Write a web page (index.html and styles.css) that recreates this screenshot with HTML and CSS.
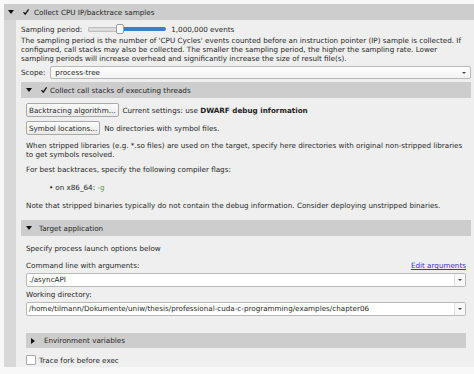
FILE: index.html
```html
<!DOCTYPE html>
<html lang="en">
<head>
    <meta charset="UTF-8">
    <title>Record settings</title>
    <link rel="stylesheet" href="styles.css">
</head>
<body>
    <div class="panel">
        <div class="head head-top">
            <span class="arrow-down"></span>
            <span class="check on"><svg viewBox="0 0 8 8"><path d="M1.5 4.2 L3.2 6.2 L6.6 1.4" fill="none" stroke="#111" stroke-width="1.3"/></svg></span>
            <span>Collect CPU IP/backtrace samples</span>
        </div>
        <div class="body body-top">
            <div class="row sampling">
                <span>Sampling period:</span>
                <div class="slider">
                    <span class="track-left"></span>
                    <span class="handle"></span>
                    <span class="track-right"></span>
                </div>
                <span>1,000,000 events</span>
            </div>
            <p class="desc">The sampling period is the number of 'CPU Cycles' events counted before an instruction pointer (IP) sample is collected. If configured, call stacks may also be collected. The smaller the sampling period, the higher the sampling rate. Lower sampling periods will increase overhead and significantly increase the size of result file(s).</p>
            <div class="row scope">
                <span>Scope:</span>
                <div class="select">
                    <span>process-tree</span>
                    <span class="drop"></span>
                </div>
            </div>

            <div class="head head-sub">
                <span class="arrow-down"></span>
                <span class="check on"><svg viewBox="0 0 8 8"><path d="M1.5 4.2 L3.2 6.2 L6.6 1.4" fill="none" stroke="#111" stroke-width="1.3"/></svg></span>
                <span>Collect call stacks of executing threads</span>
            </div>
            <div class="body body-sub">
                <div class="row btn-row first">
                    <button class="btn">Backtracing algorithm...</button>
                    <span>Current settings: use <b>DWARF debug information</b></span>
                </div>
                <div class="row btn-row">
                    <button class="btn">Symbol locations...</button>
                    <span>No directories with symbol files.</span>
                </div>
                <p class="note">When stripped libraries (e.g. *.so files) are used on the target, specify here directories with original non-stripped libraries to get symbols resolved.</p>
                <p class="note">For best backtraces, specify the following compiler flags:</p>
                <ul class="flags">
                    <li>on x86_64: <span class="flag">-g</span></li>
                </ul>
                <p class="note">Note that stripped binaries typically do not contain the debug information. Consider deploying unstripped binaries.</p>
            </div>

            <div class="head head-sub target">
                <span class="arrow-down"></span>
                <span>Target application</span>
            </div>
            <div class="body body-target">
                <p class="note">Specify process launch options below</p>
                <div class="label-row">
                    <span>Command line with arguments:</span>
                    <a href="#" class="link">Edit arguments</a>
                </div>
                <div class="combo">
                    <span class="combo-text">./asyncAPI</span>
                    <span class="combo-btn"><span class="drop"></span></span>
                </div>
                <div class="label-row">
                    <span>Working directory:</span>
                </div>
                <div class="combo">
                    <span class="combo-text">/home/tilmann/Dokumente/uniw/thesis/professional-cuda-c-programming/examples/chapter06</span>
                    <span class="combo-btn"><span class="drop"></span></span>
                </div>
                <div class="head head-env">
                    <span class="arrow-right"></span>
                    <span>Environment variables</span>
                </div>
                <label class="row trace">
                    <span class="check box"></span>
                    <span>Trace fork before exec</span>
                </label>
            </div>
        </div>
    </div>
</body>
</html>
```

FILE: styles.css
```css
:root {
    --head-bg: #cdcdcd;
    --strip-bg: #d8d8d8;
    --content-bg: #efefef;
    --text: #1f1f1f;
    --border: #b9b9b9;
}

body {
    margin: 0;
    background-color: #f8f8f8;
    font-family: "DejaVu Sans", sans-serif;
    font-size: 7.2px;
    line-height: 9px;
    color: var(--text);
    overflow: hidden;
}

p {
    margin: 0;
}

.panel {
    margin: 4px 0 0 4px;
}

/* collapsible headers */
.head {
    display: flex;
    align-items: center;
    background-color: var(--head-bg);
}

.head-top {
    height: 16px;
    padding-left: 4px;
}

.head-top .check {
    margin: 0 4px 0 8px;
}

.head-sub {
    height: 16px;
    margin-top: 3px;
    margin-right: 3px;
    padding-left: 5px;
}

.head-sub .check {
    margin: 0 2px 0 8px;
}

.target {
    margin-top: 10px;
}

.target .arrow-down {
    margin-right: 7px;
}

.head-env {
    height: 15px;
    margin-top: 17px;
    padding-left: 5px;
}

.arrow-down {
    width: 0;
    height: 0;
    border-left: 3px solid transparent;
    border-right: 3px solid transparent;
    border-top: 4px solid #111;
}

.arrow-right {
    width: 0;
    height: 0;
    border-top: 3px solid transparent;
    border-bottom: 3px solid transparent;
    border-left: 4px solid #111;
    margin-right: 9px;
}

.check {
    width: 8px;
    height: 8px;
    display: inline-block;
    flex-shrink: 0;
}

.check svg {
    display: block;
    width: 8px;
    height: 8px;
}

.check.box {
    width: 8px;
    height: 8px;
    background-color: #fff;
    border: 1px solid #a9a9a9;
    border-radius: 1px;
    margin-right: 3px;
}

/* section bodies */
.body-top {
    background-color: var(--content-bg);
    border-left: 12px solid var(--strip-bg);
    padding: 3px 0 2px 5px;
}

.body-sub {
    padding: 5px 0 0 5px;
}

.body-target {
    padding: 2px 8px 0 5px;
}

.row {
    display: flex;
    align-items: center;
}

.sampling {
    height: 12px;
}

.slider {
    display: flex;
    align-items: center;
    width: 78px;
    margin: 0 5px 0 6px;
}

.track-left {
    width: 27px;
    height: 3px;
    background-color: #dcdcdc;
    border: 1px solid #bdbdbd;
    border-right: none;
    border-radius: 2px 0 0 2px;
}

.handle {
    width: 6px;
    height: 8px;
    background-color: #fbfbfb;
    border: 1px solid #9c9c9c;
    border-radius: 2px;
}

.track-right {
    flex: 1;
    height: 4px;
    background-color: #3d7fc0;
    border-radius: 0 2px 2px 0;
}

.desc {
    margin-top: 1px;
    padding-right: 6px;
}

.scope {
    margin-top: 3px;
    margin-right: 3px;
}

.select {
    flex: 1;
    height: 11px;
    margin-left: 5px;
    display: flex;
    align-items: center;
    justify-content: space-between;
    padding: 0 4px;
    background: linear-gradient(#fefefe, #f3f3f3);
    border: 1px solid var(--border);
    border-radius: 2px;
}

.drop {
    width: 0;
    height: 0;
    border-left: 2px solid transparent;
    border-right: 2px solid transparent;
    border-top: 2px solid #444;
}

.btn-row {
    height: 14px;
    margin-top: 4px;
}

.btn-row.first {
    margin-top: 0;
}

.btn {
    height: 14px;
    margin-right: 4px;
    padding: 0 2px;
    font-family: inherit;
    font-size: 7.2px;
    color: var(--text);
    background: linear-gradient(#fcfcfc, #e9e9e9);
    border: 1px solid #a9a9a9;
    border-radius: 2px;
}

.note {
    margin-top: 6px;
    padding-right: 6px;
}

.flags {
    margin: 9px 0 0;
    padding-left: 23px;
    list-style: none;
}

.flags li::before {
    content: "\2022";
    margin-right: 2px;
}

.flags + .note {
    margin-top: 9px;
}

.flag {
    color: #4f9b4f;
}

.label-row {
    display: flex;
    justify-content: space-between;
    margin-top: 8px;
}

.combo + .label-row {
    margin-top: 3px;
}

.link {
    color: #3535c9;
    text-decoration: underline;
}

.combo {
    display: flex;
    height: 12px;
    margin-top: 3px;
    background-color: #fff;
    border: 1px solid var(--border);
    border-radius: 2px;
}

.combo-text {
    flex: 1;
    padding-left: 2px;
    line-height: 12px;
    white-space: nowrap;
    overflow: hidden;
}

.combo-btn {
    width: 10px;
    display: flex;
    align-items: center;
    justify-content: center;
    border-left: 1px solid #dedede;
    background-color: #f7f7f7;
}

.trace {
    margin-top: 7px;
    height: 10px;
}
```
